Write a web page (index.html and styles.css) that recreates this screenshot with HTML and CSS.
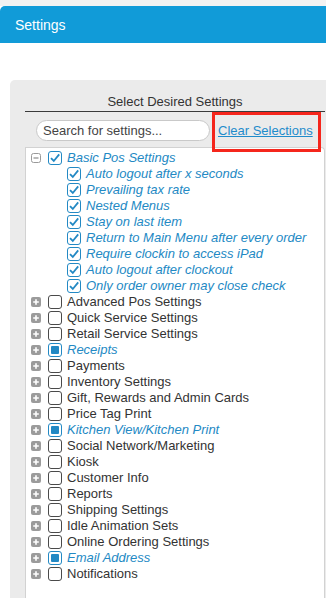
FILE: index.html
```html
<!DOCTYPE html>
<html>
<head>
<meta charset="utf-8">
<link rel="stylesheet" href="styles.css">
</head>
<body>
<div class="topband"></div>
<div class="header">Settings</div>
<div class="gap"></div>
<div class="panel">
  <div class="title">Select Desired Settings</div>
  <div class="searchrow">
    <input class="search" type="text" placeholder="Search for settings...">
    <a class="clear" href="#">Clear Selections</a>
    <span class="highlight"></span>
  </div>
  <div class="tree">
    <div class="row">
      <svg class="tog" width="10" height="10" viewBox="0 0 10 10"><rect x="0.5" y="0.5" width="9" height="9" rx="2" fill="#fff" stroke="#9a9a9a"/><path d="M2.5 5H7.5" stroke="#8a8a8a" stroke-width="1.2"/></svg>
      <span class="cb on"><svg width="12" height="12" viewBox="0 0 12 12"><path d="M2 6.1L4.8 9L10.2 2.4" fill="none" stroke="#2389c4" stroke-width="1.8"/></svg></span>
      <span class="lbl sel">Basic Pos Settings</span>
    </div>
    <div class="row child"><span class="cb on"><svg width="12" height="12" viewBox="0 0 12 12"><path d="M2 6.1L4.8 9L10.2 2.4" fill="none" stroke="#2389c4" stroke-width="1.8"/></svg></span><span class="lbl sel">Auto logout after x seconds</span></div>
    <div class="row child"><span class="cb on"><svg width="12" height="12" viewBox="0 0 12 12"><path d="M2 6.1L4.8 9L10.2 2.4" fill="none" stroke="#2389c4" stroke-width="1.8"/></svg></span><span class="lbl sel">Prevailing tax rate</span></div>
    <div class="row child"><span class="cb on"><svg width="12" height="12" viewBox="0 0 12 12"><path d="M2 6.1L4.8 9L10.2 2.4" fill="none" stroke="#2389c4" stroke-width="1.8"/></svg></span><span class="lbl sel">Nested Menus</span></div>
    <div class="row child"><span class="cb on"><svg width="12" height="12" viewBox="0 0 12 12"><path d="M2 6.1L4.8 9L10.2 2.4" fill="none" stroke="#2389c4" stroke-width="1.8"/></svg></span><span class="lbl sel">Stay on last item</span></div>
    <div class="row child"><span class="cb on"><svg width="12" height="12" viewBox="0 0 12 12"><path d="M2 6.1L4.8 9L10.2 2.4" fill="none" stroke="#2389c4" stroke-width="1.8"/></svg></span><span class="lbl sel">Return to Main Menu after every order</span></div>
    <div class="row child"><span class="cb on"><svg width="12" height="12" viewBox="0 0 12 12"><path d="M2 6.1L4.8 9L10.2 2.4" fill="none" stroke="#2389c4" stroke-width="1.8"/></svg></span><span class="lbl sel">Require clockin to access iPad</span></div>
    <div class="row child"><span class="cb on"><svg width="12" height="12" viewBox="0 0 12 12"><path d="M2 6.1L4.8 9L10.2 2.4" fill="none" stroke="#2389c4" stroke-width="1.8"/></svg></span><span class="lbl sel">Auto logout after clockout</span></div>
    <div class="row child"><span class="cb on"><svg width="12" height="12" viewBox="0 0 12 12"><path d="M2 6.1L4.8 9L10.2 2.4" fill="none" stroke="#2389c4" stroke-width="1.8"/></svg></span><span class="lbl sel">Only order owner may close check</span></div>

    <div class="row"><svg class="tog" width="10" height="10" viewBox="0 0 10 10"><rect width="10" height="10" rx="2" fill="#9b9b9b"/><path d="M2.2 5H7.8M5 2.2V7.8" stroke="#fff" stroke-width="1.6"/></svg><span class="cb"></span><span class="lbl">Advanced Pos Settings</span></div>
    <div class="row"><svg class="tog" width="10" height="10" viewBox="0 0 10 10"><rect width="10" height="10" rx="2" fill="#9b9b9b"/><path d="M2.2 5H7.8M5 2.2V7.8" stroke="#fff" stroke-width="1.6"/></svg><span class="cb"></span><span class="lbl">Quick Service Settings</span></div>
    <div class="row"><svg class="tog" width="10" height="10" viewBox="0 0 10 10"><rect width="10" height="10" rx="2" fill="#9b9b9b"/><path d="M2.2 5H7.8M5 2.2V7.8" stroke="#fff" stroke-width="1.6"/></svg><span class="cb"></span><span class="lbl">Retail Service Settings</span></div>
    <div class="row"><svg class="tog" width="10" height="10" viewBox="0 0 10 10"><rect width="10" height="10" rx="2" fill="#9b9b9b"/><path d="M2.2 5H7.8M5 2.2V7.8" stroke="#fff" stroke-width="1.6"/></svg><span class="cb part"><span class="fill"></span></span><span class="lbl sel">Receipts</span></div>
    <div class="row"><svg class="tog" width="10" height="10" viewBox="0 0 10 10"><rect width="10" height="10" rx="2" fill="#9b9b9b"/><path d="M2.2 5H7.8M5 2.2V7.8" stroke="#fff" stroke-width="1.6"/></svg><span class="cb"></span><span class="lbl">Payments</span></div>
    <div class="row"><svg class="tog" width="10" height="10" viewBox="0 0 10 10"><rect width="10" height="10" rx="2" fill="#9b9b9b"/><path d="M2.2 5H7.8M5 2.2V7.8" stroke="#fff" stroke-width="1.6"/></svg><span class="cb"></span><span class="lbl">Inventory Settings</span></div>
    <div class="row"><svg class="tog" width="10" height="10" viewBox="0 0 10 10"><rect width="10" height="10" rx="2" fill="#9b9b9b"/><path d="M2.2 5H7.8M5 2.2V7.8" stroke="#fff" stroke-width="1.6"/></svg><span class="cb"></span><span class="lbl">Gift, Rewards and Admin Cards</span></div>
    <div class="row"><svg class="tog" width="10" height="10" viewBox="0 0 10 10"><rect width="10" height="10" rx="2" fill="#9b9b9b"/><path d="M2.2 5H7.8M5 2.2V7.8" stroke="#fff" stroke-width="1.6"/></svg><span class="cb"></span><span class="lbl">Price Tag Print</span></div>
    <div class="row"><svg class="tog" width="10" height="10" viewBox="0 0 10 10"><rect width="10" height="10" rx="2" fill="#9b9b9b"/><path d="M2.2 5H7.8M5 2.2V7.8" stroke="#fff" stroke-width="1.6"/></svg><span class="cb part"><span class="fill"></span></span><span class="lbl sel">Kitchen View/Kitchen Print</span></div>
    <div class="row"><svg class="tog" width="10" height="10" viewBox="0 0 10 10"><rect width="10" height="10" rx="2" fill="#9b9b9b"/><path d="M2.2 5H7.8M5 2.2V7.8" stroke="#fff" stroke-width="1.6"/></svg><span class="cb"></span><span class="lbl">Social Network/Marketing</span></div>
    <div class="row"><svg class="tog" width="10" height="10" viewBox="0 0 10 10"><rect width="10" height="10" rx="2" fill="#9b9b9b"/><path d="M2.2 5H7.8M5 2.2V7.8" stroke="#fff" stroke-width="1.6"/></svg><span class="cb"></span><span class="lbl">Kiosk</span></div>
    <div class="row"><svg class="tog" width="10" height="10" viewBox="0 0 10 10"><rect width="10" height="10" rx="2" fill="#9b9b9b"/><path d="M2.2 5H7.8M5 2.2V7.8" stroke="#fff" stroke-width="1.6"/></svg><span class="cb"></span><span class="lbl">Customer Info</span></div>
    <div class="row"><svg class="tog" width="10" height="10" viewBox="0 0 10 10"><rect width="10" height="10" rx="2" fill="#9b9b9b"/><path d="M2.2 5H7.8M5 2.2V7.8" stroke="#fff" stroke-width="1.6"/></svg><span class="cb"></span><span class="lbl">Reports</span></div>
    <div class="row"><svg class="tog" width="10" height="10" viewBox="0 0 10 10"><rect width="10" height="10" rx="2" fill="#9b9b9b"/><path d="M2.2 5H7.8M5 2.2V7.8" stroke="#fff" stroke-width="1.6"/></svg><span class="cb"></span><span class="lbl">Shipping Settings</span></div>
    <div class="row"><svg class="tog" width="10" height="10" viewBox="0 0 10 10"><rect width="10" height="10" rx="2" fill="#9b9b9b"/><path d="M2.2 5H7.8M5 2.2V7.8" stroke="#fff" stroke-width="1.6"/></svg><span class="cb"></span><span class="lbl">Idle Animation Sets</span></div>
    <div class="row"><svg class="tog" width="10" height="10" viewBox="0 0 10 10"><rect width="10" height="10" rx="2" fill="#9b9b9b"/><path d="M2.2 5H7.8M5 2.2V7.8" stroke="#fff" stroke-width="1.6"/></svg><span class="cb"></span><span class="lbl">Online Ordering Settings</span></div>
    <div class="row"><svg class="tog" width="10" height="10" viewBox="0 0 10 10"><rect width="10" height="10" rx="2" fill="#9b9b9b"/><path d="M2.2 5H7.8M5 2.2V7.8" stroke="#fff" stroke-width="1.6"/></svg><span class="cb part"><span class="fill"></span></span><span class="lbl sel">Email Address</span></div>
    <div class="row"><svg class="tog" width="10" height="10" viewBox="0 0 10 10"><rect width="10" height="10" rx="2" fill="#9b9b9b"/><path d="M2.2 5H7.8M5 2.2V7.8" stroke="#fff" stroke-width="1.6"/></svg><span class="cb"></span><span class="lbl">Notifications</span></div>
  </div>
</div>
</body>
</html>
```
FILE: styles.css
```css
* { box-sizing: border-box; }
html, body { margin: 0; padding: 0; }
body {
  background: #fff;
  font-family: "Liberation Sans", Arial, sans-serif;
  color: #333;
  width: 326px;
  height: 598px;
  overflow: hidden;
}
.topband { height: 6px; background: #f2f2f2; }
.header {
  height: 37px;
  background: #119bd8;
  border-top-left-radius: 5px;
  color: #fff;
  font-size: 14px;
  display: flex;
  align-items: center;
  padding-left: 15px;
}
.gap { height: 37px; }
.panel {
  margin-left: 10px;
  background: #ebebeb;
  border-top-left-radius: 5px;
  padding: 14px 0 0 15px;
  height: 518px;
}
.title {
  width: 300px;
  text-align: center;
  font-size: 13px;
  line-height: 16px;
  height: 18px;
  border-bottom: 1px solid #3a3a3a;
  color: #333;
}
.searchrow {
  position: relative;
  display: flex;
  align-items: center;
  height: 35px;
  width: 300px;
}
.search {
  margin: 0 0 0 11px;
  width: 174px;
  height: 21px;
  border: 1px solid #c9c9c9;
  border-radius: 11px;
  background: #fff;
  font-family: "Liberation Sans", Arial, sans-serif;
  font-size: 13px;
  padding: 0 0 0 6px;
  outline: none;
  position: relative;
  top: 1px;
}
.search::placeholder { color: #444; opacity: 1; }
.clear {
  margin-left: 8px;
  font-size: 13px;
  color: #1f8ccb;
  text-decoration: underline;
  position: relative;
  top: 1px;
}
.highlight {
  position: absolute;
  left: 187px;
  top: 0;
  width: 109px;
  height: 40px;
  border: 3px solid #f5261c;
}
.tree {
  width: 300px;
  height: 451px;
  background: #fff;
  border: 1px solid #d2d2d2;
  border-bottom: none;
  border-top-right-radius: 4px;
  padding: 2px 0 0 5px;
}
.row {
  display: flex;
  align-items: center;
  height: 16px;
  font-size: 13px;
  white-space: nowrap;
}
.tog { flex: none; margin-right: 7px; display: block; }
.row.child { padding-left: 36px; }
.cb {
  flex: none;
  width: 14px;
  height: 14px;
  border: 1px solid #4a4a4a;
  border-radius: 3px;
  background: #fff;
  display: flex;
  align-items: center;
  justify-content: center;
  margin-right: 5px;
}
.cb.on, .cb.part { border-color: #2389c4; }
.cb svg { display: block; }
.fill {
  width: 8px;
  height: 8px;
  background: #2389c4;
  border-radius: 1px;
}
.lbl { color: #333; line-height: 16px; }
.lbl.sel { color: #2389c4; font-style: italic; }
```
